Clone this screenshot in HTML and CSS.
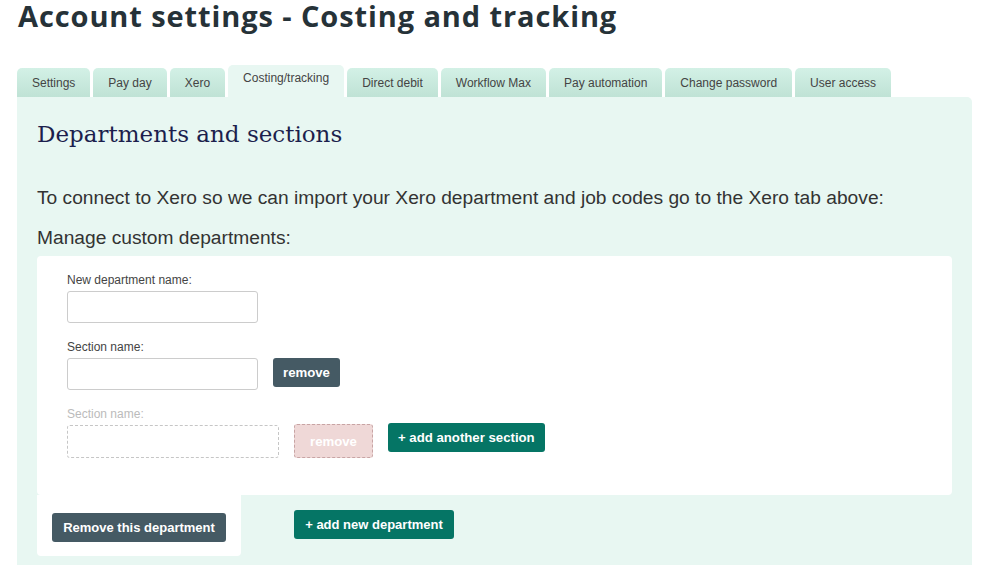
FILE: index.html
```html
<!DOCTYPE html>
<html lang="en">
<head>
<meta charset="UTF-8">
<meta name="viewport" content="width=device-width, initial-scale=1.0">
<title>Account settings</title>
<link rel="stylesheet" href="styles.css">
</head>
<body>
<div class="page">
  <h1>Account settings - Costing and tracking</h1>

  <div class="tabs">
    <a class="tab" href="#">Settings</a>
    <a class="tab" href="#">Pay day</a>
    <a class="tab" href="#">Xero</a>
    <a class="tab active" href="#">Costing/tracking</a>
    <a class="tab" href="#">Direct debit</a>
    <a class="tab" href="#">Workflow Max</a>
    <a class="tab" href="#">Pay automation</a>
    <a class="tab" href="#">Change password</a>
    <a class="tab" href="#">User access</a>
  </div>

  <div class="panel">
    <h2>Departments and sections</h2>
    <p class="intro">To connect to Xero so we can import your Xero department and job codes go to the Xero tab above:</p>
    <p class="manage">Manage custom departments:</p>

    <div class="dept">
      <div class="dept-body">
        <div class="field">
          <label>New department name:</label>
          <input type="text">
        </div>
        <div class="section-row">
          <div class="field">
            <label>Section name:</label>
            <input type="text">
          </div>
          <button class="btn btn-dark">remove</button>
        </div>
        <div class="section-row ghost">
          <div class="field">
            <label>Section name:</label>
            <input type="text">
          </div>
          <button class="btn btn-ghost">remove</button>
          <button class="btn btn-teal">+ add another section</button>
        </div>
      </div>
      <div class="dept-foot">
        <div class="remove-wrap">
          <button class="btn btn-dark btn-big">Remove this department</button>
        </div>
        <button class="btn btn-teal btn-big add-dept">+ add new department</button>
      </div>
    </div>
  </div>
</div>
</body>
</html>
```

FILE: styles.css
```css
body {
  margin: 0;
  font-family: "Liberation Sans", Arial, sans-serif;
  background: #fff;
  color: #333;
}

.page {
  padding: 0 11px 0 17px;
}

h1 {
  margin: 0 0 0 1px;
  font-family: "Open Sans", sans-serif;
  font-weight: 700;
  font-size: 29px;
  line-height: 32px;
  letter-spacing: 0.9px;
  color: #263238;
}

.tabs {
  display: flex;
  align-items: flex-end;
  gap: 3px;
  margin-top: 33px;
}

.tab {
  display: block;
  height: 29px;
  line-height: 30px;
  padding: 0 15px;
  font-size: 12px;
  color: #444;
  text-decoration: none;
  background: linear-gradient(#d3f1e6, #bfe2d5);
  border-radius: 5px 5px 0 0;
}

.tab.active {
  height: 32px;
  line-height: 27px;
  padding: 0 15px;
  background: #e8f7f2;
}

.panel {
  background: #e8f7f2;
  border-radius: 0 5px 0 0;
  padding: 22px 20px 10px 20px;
  height: 460px;
}

h2 {
  margin: 0;
  font-family: "DejaVu Serif", serif;
  font-weight: normal;
  font-size: 23px;
  line-height: 30px;
  color: #1c1f4d;
}

.intro,
.manage {
  margin: 0;
  font-size: 19.2px;
  line-height: 22px;
  color: #333;
}

.intro {
  margin-top: 38px;
}

.manage {
  margin-top: 18px;
  margin-bottom: 7px;
}

.dept-body {
  background: #fff;
  border-radius: 4px;
  padding: 17px 30px 37px 30px;
}

.field {
  margin-bottom: 17px;
}

.field label {
  display: block;
  font-size: 12px;
  line-height: 15px;
  margin-bottom: 3px;
  color: #444;
}

.field input {
  display: block;
  width: 191px;
  height: 32px;
  box-sizing: border-box;
  border: 1px solid #ccc;
  border-radius: 3px;
  background: #fff;
}

.section-row {
  display: flex;
  align-items: flex-end;
  gap: 15px;
}

.section-row .field {
  margin-bottom: 0;
}

.section-row .btn {
  margin-bottom: 3px;
}

.section-row.ghost {
  margin-top: 17px;
}

.ghost .field label {
  color: #bbb;
}

.ghost .field input {
  width: 212px;
  height: 33px;
  border: 1px dashed #c6c6c6;
}

.ghost .btn {
  margin-bottom: 6px;
}

.ghost .btn-ghost {
  margin-bottom: 0;
}

.btn {
  border: none;
  border-radius: 3px;
  font-family: "Liberation Sans", Arial, sans-serif;
  font-weight: 700;
  font-size: 13.2px;
  color: #fff;
  height: 29px;
  padding: 0 10px;
  cursor: pointer;
}

.btn-dark {
  background: #455a64;
  min-width: 67px;
}

.btn-teal {
  background: #057565;
}

.btn-ghost {
  width: 79px;
  height: 34px;
  background: #efd8d7;
  border: 1px dashed #c8a4a4;
  color: #fff;
}

.btn-big {
  font-size: 13px;
}

.dept-foot {
  display: flex;
  align-items: flex-start;
}

.remove-wrap {
  background: #fff;
  width: 204px;
  box-sizing: border-box;
  padding: 18px 15px 14px 15px;
  border-radius: 0 0 4px 4px;
}

.remove-wrap .btn {
  width: 174px;
}

.add-dept {
  margin-left: 53px;
  margin-top: 15px;
  width: 160px;
}
```
